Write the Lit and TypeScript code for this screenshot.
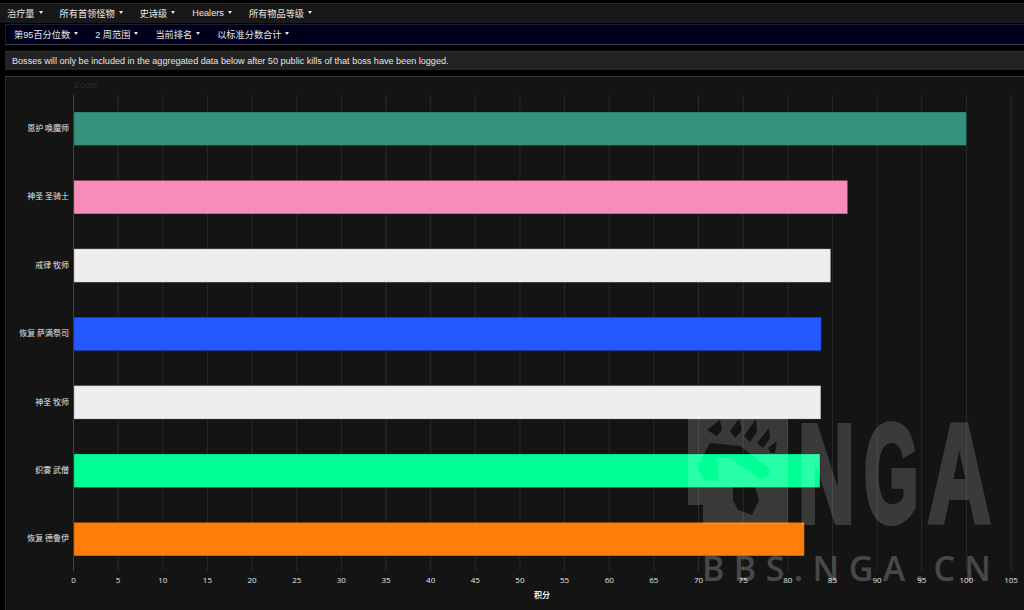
import { LitElement, html, css, svg } from "lit";
import { customElement } from "lit/decorators.js";

const BARS = [
  { label: "恩护 唤魔师", value: 100, color: "#33937f" },
  { label: "神圣 圣骑士", value: 86.7, color: "#f58cba" },
  { label: "戒律 牧师", value: 84.8, color: "#eeeeee" },
  { label: "恢复 萨满祭司", value: 83.75, color: "#2459ff" },
  { label: "神圣 牧师", value: 83.7, color: "#eeeeee" },
  { label: "织雾 武僧", value: 83.6, color: "#00ff96" },
  { label: "恢复 德鲁伊", value: 81.85, color: "#ff7d0a" },
];
const X0 = 73.5;
const PER = (1011 - 73.5) / 105;
const TICKS = Array.from({ length: 22 }, (_, i) => i * 5);
const NAV1 = ["治疗量", "所有首领怪物", "史诗级", "Healers", "所有物品等级"];
const NAV2 = ["第95百分位数", "2 周范围", "当前排名", "以标准分数合计"];

const PAW =
  "M688 416H788V524H703V505H688Z" +
  "M707 430L720 420L722 430L717 436Z" +
  "M730 431L739 419L742 430L735 438Z" +
  "M744 436L756 419L757 432L750 442Z" +
  "M757 443L769 428L770 438L763 448Z" +
  "M768 448L777 441L775 453L771 453Z" +
  "M697 467L710 443L740 446L771 470L767 477L760 479L730 458L717 458L719 481L704 480Z" +
  "M733 487L755 487L759 500L752 515L738 510L733 500Z";

@customElement("app-root")
export class AppRoot extends LitElement {
  static styles = css`
    :host {
      display: block;
      width: 1024px;
      height: 610px;
      background: #000;
      overflow: hidden;
      font-family: "Liberation Sans", "Noto Sans CJK SC", sans-serif;
    }
    * {
      box-sizing: border-box;
    }
    .page {
      display: flex;
      flex-direction: column;
      height: 610px;
      padding-top: 3px;
    }
    .nav {
      display: flex;
      align-items: center;
      color: #e8e8e8;
      font-size: 9.2px;
      padding-bottom: 2px;
    }
    .nav-main {
      height: 20px;
      padding-left: 7px;
      gap: 17px;
      background: #181818;
      border-top: 1px solid #2c2c2c;
    }
    .nav-sub {
      height: 21px;
      margin: 1px 0 0 5px;
      padding-left: 8px;
      gap: 17px;
      background: #00001c;
      border-top: 1px solid #1c1c30;
      border-bottom: 1px solid #3a3a48;
      border-left: 1px solid #1c1c30;
    }
    .item {
      display: flex;
      align-items: center;
      gap: 4px;
      white-space: nowrap;
    }
    .caret {
      width: 0;
      height: 0;
      border-left: 2.8px solid transparent;
      border-right: 2.8px solid transparent;
      border-top: 3px solid #e8e8e8;
    }
    .notice {
      height: 19px;
      margin: 6px 0 0 5px;
      padding-left: 7px;
      display: flex;
      align-items: center;
      font-size: 9.08px;
      color: #e4e4e4;
      background: #232323;
      border-top: 1px solid #2e2e2e;
      white-space: nowrap;
    }
    .panel {
      flex: 1;
      margin: 6px 0 0 5px;
      background: #141414;
      border-top: 1px solid #3a3a3a;
      border-left: 1px solid #2a2a2a;
      min-height: 0;
    }
    svg {
      display: block;
    }
    .grid {
      stroke: #2a2a2b;
      stroke-width: 1;
    }
    .axis {
      stroke: #444446;
      stroke-width: 1;
    }
    .bar {
      stroke: rgba(0, 0, 0, 0.2);
      stroke-width: 1;
    }
    .cat {
      font: 8px "Noto Sans CJK SC", sans-serif;
      fill: #e6e6e6;
      text-anchor: end;
    }
    .tick {
      font: 8px "Open Sans", sans-serif;
      fill: #e6e6e6;
      text-anchor: middle;
    }
    .title {
      font: 700 8px "Noto Sans CJK SC", sans-serif;
      fill: #f0f0f0;
      text-anchor: middle;
    }
    .zoom {
      font: 9px "Liberation Sans", sans-serif;
      fill: #2a2a2a;
    }
    .mark {
      fill: #fff;
      opacity: 0.16;
    }
    .mark-word {
      font: 700 140px "Liberation Sans", sans-serif;
      stroke: #fff;
      stroke-width: 6px;
    }
    .mark-url {
      font: 600 34px "Open Sans", sans-serif;
      fill: #fff;
      opacity: 0.22;
    }
  `;

  private chart() {
    return svg`
      <text class="zoom" x="74" y="88">Zoom</text>
      ${TICKS.map((t) => {
        const x = X0 + t * PER;
        return svg`
          <line class=${t === 0 ? "axis" : "grid"} x1=${x} x2=${x} y1="95" y2="571"></line>
          <text class="tick" x=${x} y="583">${t}</text>`;
      })}
      ${BARS.map((b, i) => {
        const y = 112 + i * 68.4;
        return svg`
          <rect class="bar" x="74" y=${y} width=${b.value * PER - 0.5} height="33.5" fill=${b.color}></rect>
          <text class="cat" x="69" y=${y + 19}>${b.label}</text>`;
      })}
      <text class="title" x="542" y="598">积分</text>
      <path class="mark" fill-rule="evenodd" d=${PAW}></path>
      <g class="mark">
        <text class="mark-word" transform="translate(798 522) scale(0.56 1)">N</text>
        <text class="mark-word" transform="translate(864 522) scale(0.5 1)">G</text>
        <text class="mark-word" transform="translate(928 522) scale(0.62 1)">A</text>
      </g>
      <text class="mark-url" x="702" y="581" textLength="289" lengthAdjust="spacing">BBS.NGA.CN</text>
    `;
  }

  render() {
    const item = (t: string) =>
      html`<span class="item">${t}<span class="caret"></span></span>`;
    return html`
      <div class="page">
        <div class="nav nav-main">${NAV1.map(item)}</div>
        <div class="nav nav-sub">${NAV2.map(item)}</div>
        <div class="notice">
          Bosses will only be included in the aggregated data below after 50 public kills of that boss have been logged.
        </div>
        <div class="panel">
          <svg width="1018" height="533" viewBox="6 77 1018 533">${this.chart()}</svg>
        </div>
      </div>
    `;
  }
}
